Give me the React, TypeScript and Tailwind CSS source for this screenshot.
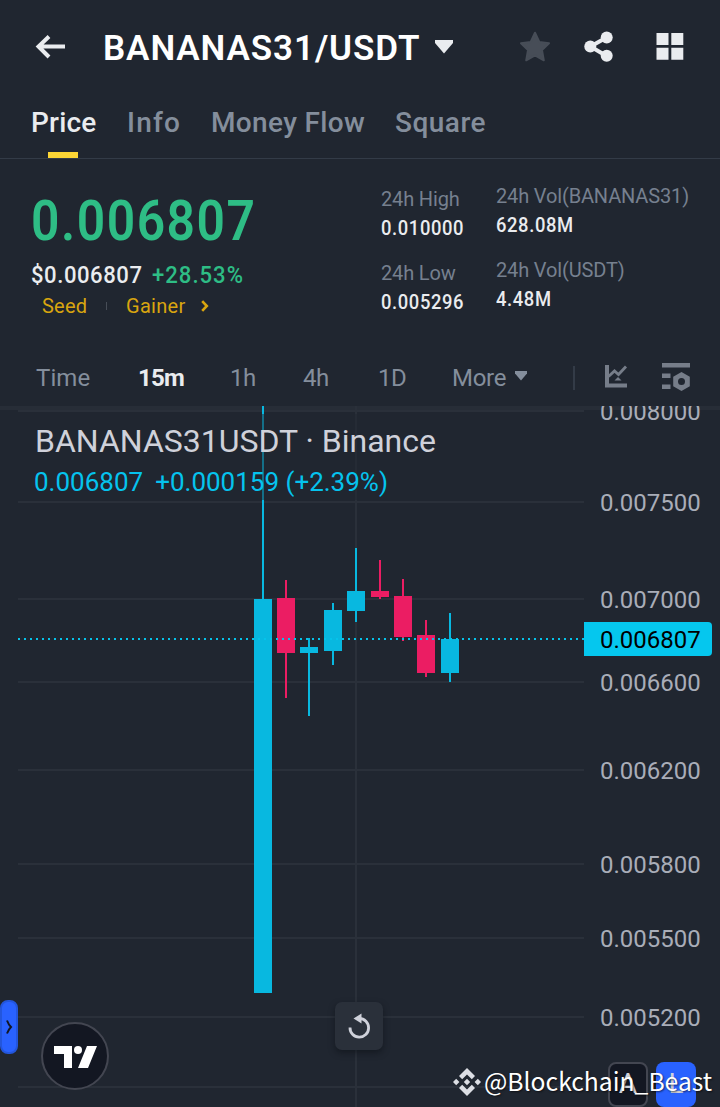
import React from "react";

type Candle = { x: number; open: number; close: number; high: number; low: number; up: boolean };

const candles: Candle[] = [
  { x: 254, open: 599, close: 993, high: 406, low: 993, up: true },
  { x: 277, open: 598, close: 653, high: 580, low: 698, up: false },
  { x: 300, open: 647, close: 653, high: 638, low: 716, up: true },
  { x: 324, open: 610, close: 651, high: 603, low: 665, up: true },
  { x: 347, open: 591, close: 611, high: 548, low: 622, up: true },
  { x: 371, open: 591, close: 597, high: 560, low: 599, up: false },
  { x: 394, open: 596, close: 637, high: 579, low: 641, up: false },
  { x: 417, open: 635, close: 673, high: 620, low: 677, up: false },
  { x: 441, open: 639, close: 673, high: 613, low: 682, up: true },
];

const levels: { y: number; label?: string; base?: number }[] = [
  { y: 411, label: "0.008000", base: 420 },
  { y: 502, label: "0.007500", base: 511 },
  { y: 599, label: "0.007000", base: 608 },
  { y: 682, label: "0.006600", base: 691 },
  { y: 770, label: "0.006200", base: 779 },
  { y: 864, label: "0.005800", base: 873 },
  { y: 938, label: "0.005500", base: 947 },
  { y: 1017, label: "0.005200", base: 1026 },
  { y: 1087 },
];

function Header() {
  return (
    <header className="flex h-[94px] items-center pl-[35px] pr-9">
      <svg className="h-6 w-[31px] shrink-0" viewBox="0 0 31 24" fill="none" stroke="#eaecef" strokeWidth="4">
        <path d="M30 11.5H3M14 1.5 3.5 11.5 14 22" />
      </svg>
      <h1 className="ml-[37px] w-[325px] whitespace-nowrap pt-[3px] text-[35px] font-semibold leading-[44px] tracking-[0.9px] text-white">
        BANANAS31/USDT
      </h1>
      <svg className="ml-[7px] h-[15px] w-[18px] shrink-0" viewBox="0 0 18 15" fill="#eaecef">
        <path d="M0 0h18v3L9 13.5 0 3z" />
      </svg>
      <svg className="ml-[66px] h-[32px] w-8 shrink-0" viewBox="0 0 32 32" fill="#474d57" stroke="#474d57" strokeWidth="2" strokeLinejoin="round">
        <path d="m16 1.7 4.3 9.3 9.7 1.3-7 6.8 1.8 10.2-8.8-4.9-8.8 4.9 1.8-10.2-7-6.8 9.7-1.3z" />
      </svg>
      <svg className="ml-[33px] h-[32px] w-[30px] shrink-0" viewBox="0 0 30 32" fill="#eaecef" stroke="#eaecef">
        <path d="M6.5 15.5 22.5 6.5M6.5 15.5l16 9.5" strokeWidth="4" />
        <circle cx="6.3" cy="15.5" r="6" stroke="none" />
        <circle cx="22.7" cy="6.5" r="6" stroke="none" />
        <circle cx="22.7" cy="24.7" r="6" stroke="none" />
      </svg>
      <svg className="ml-[42px] h-[28px] w-[28px] shrink-0" viewBox="0 0 28 28" fill="#eaecef">
        <path d="M.5 0h12v12H.5zM15.3 0h12v12h-12zM.5 14.7h12v12H.5zM15.3 14.7h12v12h-12z" />
      </svg>
    </header>
  );
}

function Tabs() {
  return (
    <nav className="flex h-[65px] border-b border-[#333b47] pl-[31px] pt-[9px] text-[28px] font-medium leading-[40px] text-[#848e9c]">
      <div className="flex w-[96px] flex-col whitespace-nowrap text-[#eaecef]">
        <span className="tracking-[0.2px]">Price</span>
        <i className="ml-[17px] mt-[9px] h-[6px] w-[30px] bg-[#fcd535]" />
      </div>
      <span className="w-[84px] whitespace-nowrap tracking-[1.2px]">Info</span>
      <span className="w-[184px] whitespace-nowrap tracking-[0.35px]">Money Flow</span>
      <span className="whitespace-nowrap tracking-[0.5px]">Square</span>
    </nav>
  );
}

function Stat({ label, value }: { label: string; value: string }) {
  return (
    <div className="h-[74px] whitespace-nowrap">
      <div className="text-[20px] leading-[28px] tracking-[-0.15px] text-[#76808f]">{label}</div>
      <div className="origin-left scale-x-92 text-[20px] font-medium leading-[30px] tracking-[0.65px] text-[#eaecef]">{value}</div>
    </div>
  );
}

function Summary() {
  return (
    <section className="flex h-[191px]">
      <div className="w-[381px] pl-[31px] pt-[30px]">
        <div className="h-[67px] origin-left scale-x-89 whitespace-nowrap text-[56px] font-semibold leading-[64px] tracking-[1.7px] text-[#2ebd85]">0.006807</div>
        <div className="flex h-[36px] items-center whitespace-nowrap text-[24px] font-medium leading-[36px]">
          <span className="w-[121px] origin-left scale-x-92 pt-[2px] tracking-[0.6px] text-[#eaecef]">$0.006807</span>
          <span className="origin-left scale-x-92 pt-[2px] tracking-[1.1px] text-[#2ebd85]">+28.53%</span>
        </div>
        <div className="flex h-[28px] items-center pl-[11px] text-[20px] leading-[28px] text-[#d9a50f]">
          <span className="w-[64px] tracking-[0.2px]">Seed</span>
          <i className="h-2 w-px bg-[#474d57]" />
          <span className="ml-[19px] w-[75px] tracking-[0.3px]">Gainer</span>
          <svg className="h-3 w-2" viewBox="0 0 8 12" fill="none" stroke="currentColor" strokeWidth="2.6">
            <path d="m1.2 1.2 4.6 4.8-4.6 4.8" />
          </svg>
        </div>
      </div>
      <div className="w-[115px] pt-[26px]">
        <Stat label="24h High" value="0.010000" />
        <Stat label="24h Low" value="0.005296" />
      </div>
      <div className="pt-[23px]">
        <Stat label="24h Vol(BANANAS31)" value="628.08M" />
        <Stat label="24h Vol(USDT)" value="4.48M" />
      </div>
    </section>
  );
}

function Intervals() {
  return (
    <nav className="flex h-[56px] items-center whitespace-nowrap pl-9 text-[24px] leading-[32px] text-[#848e9c]">
      <span className="w-[102px] tracking-[0.1px]">Time</span>
      <span className="w-[92px] font-bold tracking-[-0.8px] text-[#eaecef]">15m</span>
      <span className="w-[73px] tracking-[-0.6px]">1h</span>
      <span className="w-[75px] tracking-[-0.4px]">4h</span>
      <span className="w-[74px] tracking-[-0.6px]">1D</span>
      <span className="w-[63px] tracking-[-0.3px]">More</span>
      <svg className="mb-1 h-[10px] w-3" viewBox="0 0 12 10" fill="#848e9c">
        <path d="M0 0h12v2.5L6 9.5 0 2.5z" />
      </svg>
      <i className="ml-[46px] h-6 w-[2px] bg-[#333b47]" />
      <svg className="mb-[3px] ml-[30px] h-[23px] w-[23px]" viewBox="0 0 23 23" fill="none" stroke="#767d89">
        <path d="M2 0v20.5h20" strokeWidth="4" />
        <path d="m3.5 11.5 6-5.5 4 3.5L21 1.5" strokeWidth="2.8" />
        <path d="M9.5 15.5h7L13 12z" fill="#767d89" stroke="none" />
      </svg>
      <svg className="mb-[2px] ml-[34px] h-[28px] w-[29px]" viewBox="0 0 29 28" fill="#767d89">
        <path d="M0 0h28v4.5H0zM0 10.5h8.5v4.5H0zM0 21.5h8.5V26H0z" />
        <path fillRule="evenodd" d="m19.5 9 8.3 4.8v9.4L19.5 28l-8.3-4.8v-9.4zM19.5 15a3.5 3.5 0 1 0 0 7 3.5 3.5 0 0 0 0-7z" />
      </svg>
    </nav>
  );
}

function Chart() {
  return (
    <section className="relative h-[701px] overflow-hidden">
      <svg className="block h-[701px] w-[720px] font-['Roboto']" viewBox="0 406 720 701" shapeRendering="crispEdges">
        <rect x="0" y="406" width="720" height="4" fill="#272d37" />
        {levels.map((l) => (
          <rect key={l.y} x="18" y={l.y - 1} width="566" height="2" fill="#2a303a" />
        ))}
        <rect x="355" y="406" width="2" height="701" fill="#2a303a" />
        {candles.map((c) => (
          <g key={c.x} fill={c.up ? "#08b8e0" : "#eb1d63"}>
            <rect x={c.x + 8} y={c.high} width="2" height={c.low - c.high} />
            <rect x={c.x} y={c.open} width="18" height={c.close - c.open} />
          </g>
        ))}
        <rect x="24" y="414" width="420" height="86" fill="#202630" fillOpacity="0.5" />
        <path d="M18 639H584" stroke="#05c3ea" strokeWidth="2" strokeDasharray="2 4" />
        {levels.map((l) =>
          l.label ? (
            <text key={l.label} x="600" y={l.base} fontSize="24" fill="#a9adb8">
              {l.label}
            </text>
          ) : null
        )}
        <path d="M584 622h124q4 0 4 4v26q0 4-4 4H584z" fill="#05c7ee" shapeRendering="auto" />
        <text x="600" y="648" fontSize="24" fill="#000">0.006807</text>
      </svg>

      <div className="absolute left-[34px] top-[15px] whitespace-nowrap font-['Roboto']">
        <div className="pl-[1px] text-[32px] leading-[40px] text-[#cfd1da]">BANANAS31USDT · Binance</div>
        <div className="flex gap-[12px] text-[26px] leading-[42px] text-[#05c3ee]">
          <span>0.006807</span>
          <span>+0.000159 (+2.39%)</span>
        </div>
      </div>

      <button className="absolute left-0 top-[594px] flex h-[54px] w-[18px] items-center justify-center rounded-[8px] border-2 border-[#2356dc] bg-[#2962ff]">
        <svg className="h-[16px] w-2 shrink-0" viewBox="0 0 8 16" fill="none" stroke="#131722" strokeWidth="2">
          <path d="M2 1.5Q3.5 5.5 6 8 3.5 10.5 2 14.5" />
        </svg>
      </button>

      <div className="absolute left-[41px] top-[616px] size-[68px] rounded-full border-2 border-[#434651] bg-[#131722]">
        <svg className="size-full" viewBox="43 1024 64 64" fill="#fff">
          <path d="M54 1046h18v22h-8v-14H54zM87 1046h10l-9 22H78z" />
          <circle cx="78" cy="1050" r="4" />
        </svg>
      </div>

      <button className="absolute left-[335px] top-[596px] size-[48px] rounded-[7px] bg-[#2a303a] shadow-[0_3px_6px_rgba(10,13,20,0.5)]">
        <svg className="size-full" viewBox="335 1002 48 48" fill="none" stroke="#cfd1da" strokeWidth="2.8">
          <path d="M350 1027.5a9.3 9.3 0 1 0 9.3-9" />
          <path d="m353.5 1018.5 8-5v10z" fill="#cfd1da" stroke="none" />
        </svg>
      </button>

      <div className="absolute left-[608px] top-[656px] flex h-[45px] gap-2 font-['Roboto'] text-[28px] leading-[40px] text-[#cfd1da]">
        <span className="flex w-10 justify-center rounded-[8px] border-2 border-[#434651] bg-[#131722]">A</span>
        <span className="flex w-10 justify-center rounded-[8px] bg-[#2962ff] pt-[2px]">L</span>
      </div>

      <div className="absolute left-[453px] top-[658px] flex items-center whitespace-nowrap font-['Noto_Sans_CJK_SC'] text-[24.7px] leading-[36px] text-white [text-shadow:1px_1px_2px_rgba(0,0,0,0.6)]">
        <svg className="mr-[3px] mt-[2px] size-7 shrink-0" viewBox="0 0 28 28" fill="#dcdee4">
          <path d="m14 0 8 8-3.2 3.2L14 6.4l-4.8 4.8L6 8zM14 28l-8-8 3.2-3.2 4.8 4.8 4.8-4.8L22 20zM14 10.8l3.2 3.2-3.2 3.2-3.2-3.2zM3.2 10.8 6.4 14l-3.2 3.2L0 14zM24.8 10.8 28 14l-3.2 3.2-3.2-3.2z" />
        </svg>
        <span className="-mt-[2px]">@Blockchain_Beast</span>
      </div>
    </section>
  );
}

export default function App() {
  return (
    <main className="h-[1107px] w-[720px] overflow-hidden bg-[#202630] font-['Roboto',sans-serif]">
      <Header />
      <Tabs />
      <Summary />
      <Intervals />
      <Chart />
    </main>
  );
}
